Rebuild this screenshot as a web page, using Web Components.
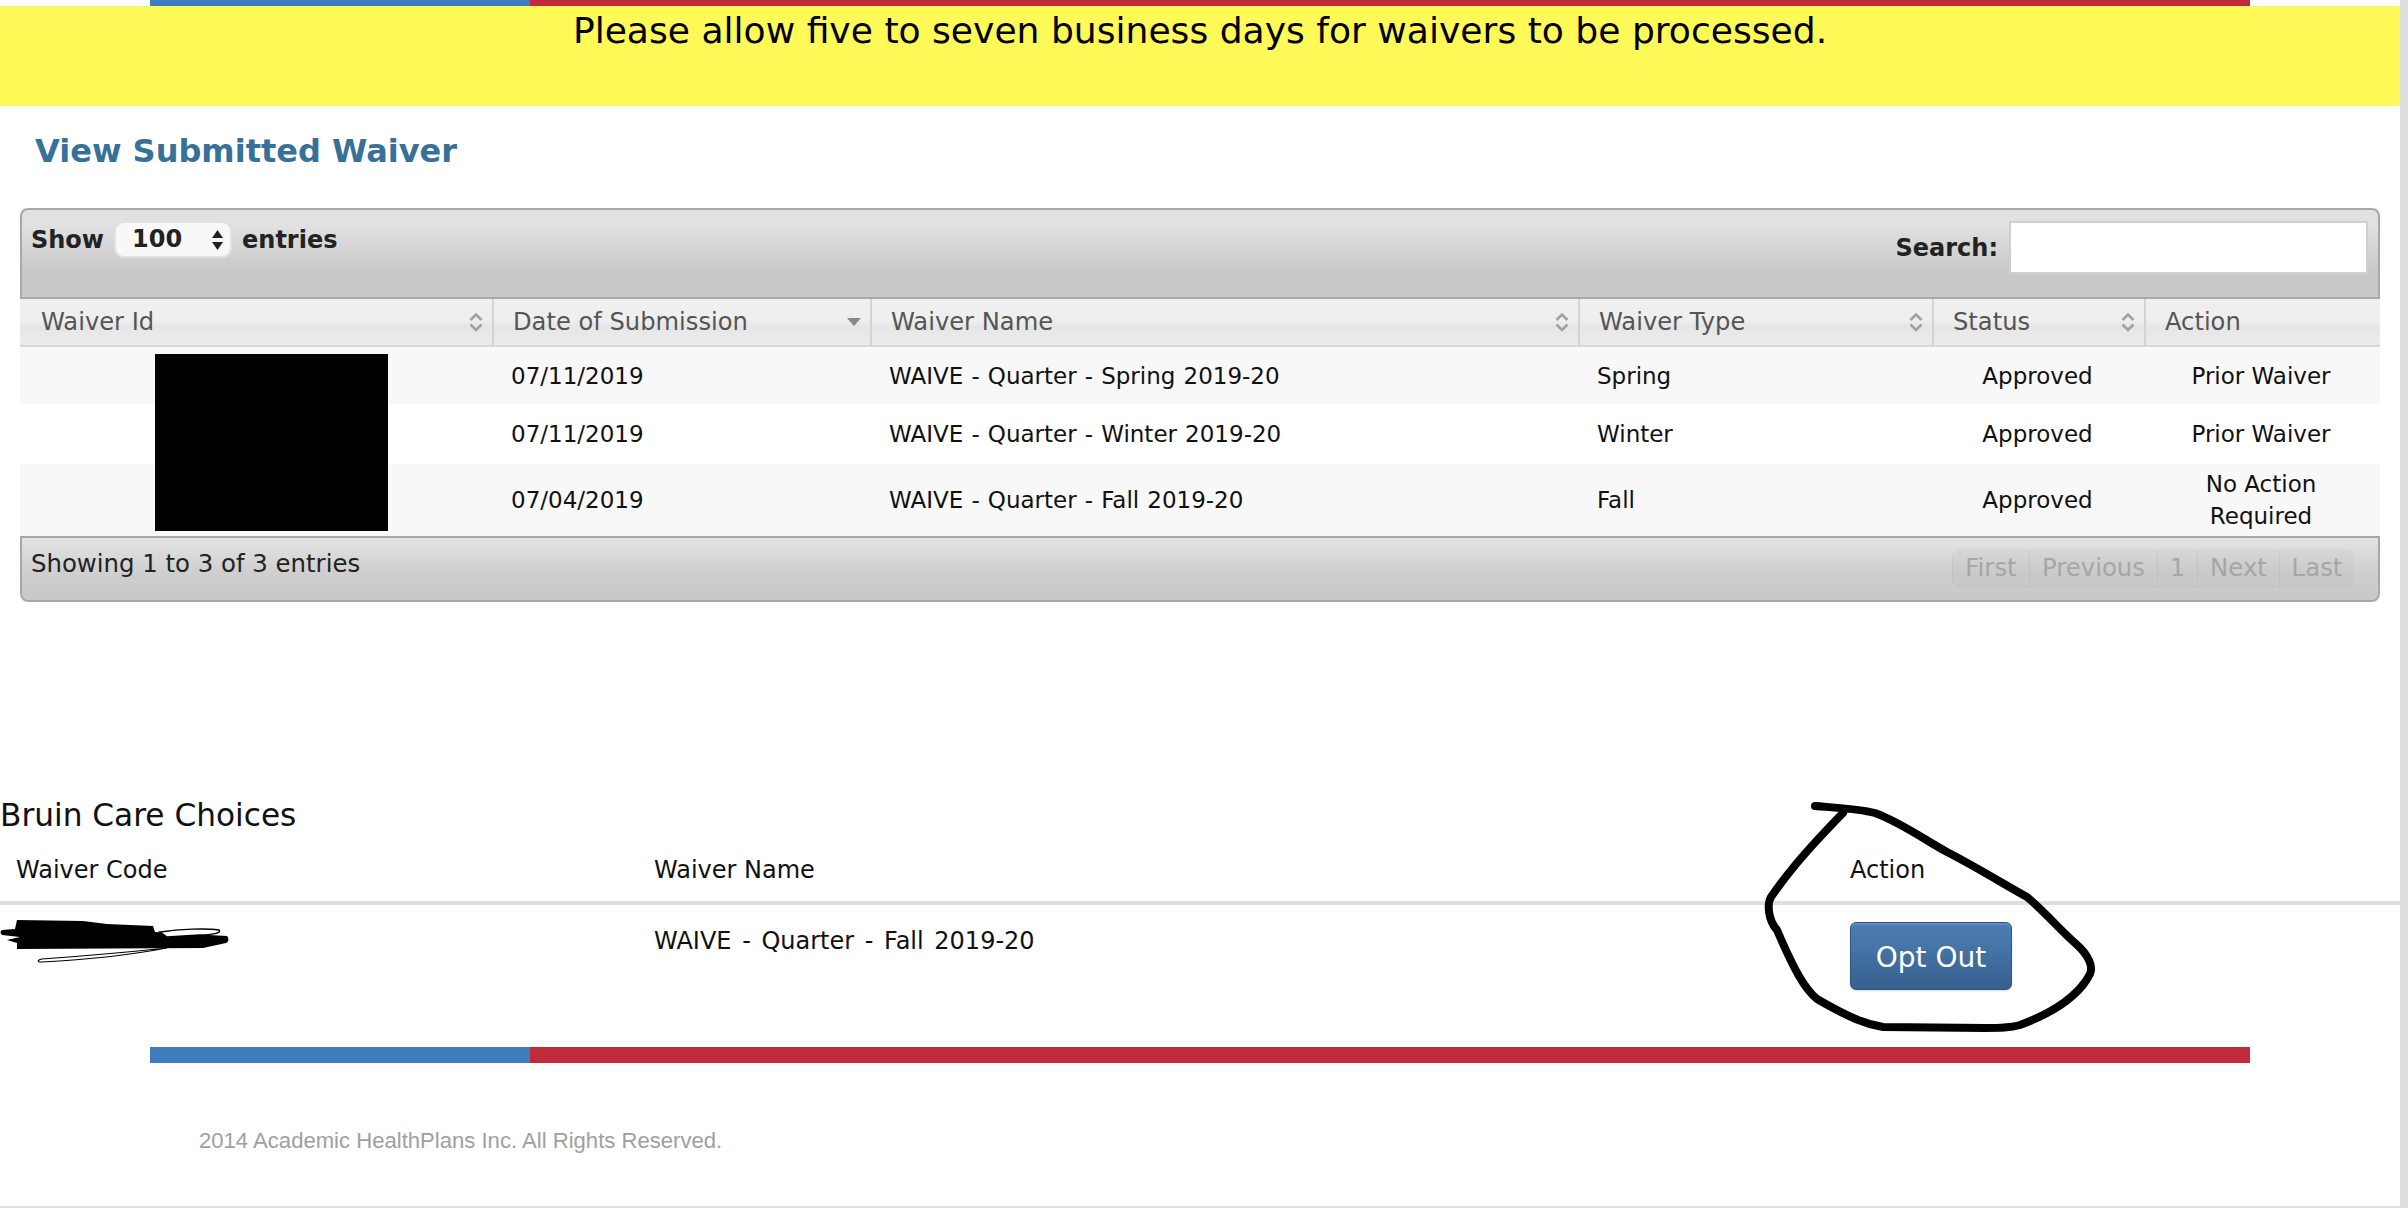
<!DOCTYPE html>
<html lang="en"><head><meta charset="utf-8"><title>View Submitted Waiver</title>
<style>
html,body{margin:0;padding:0;background:#fff;overflow:hidden;height:1208px}
body{font-family:"DejaVu Sans",sans-serif;color:#111}
</style></head><body>
<wv-app>
  <wv-stripe slot="top" thin></wv-stripe>
  <wv-banner>Please allow five to seven business days for waivers to be processed.</wv-banner>
  <wv-title>View Submitted Waiver</wv-title>
  <wv-datatable></wv-datatable>
  <wv-choices heading="Bruin Care Choices"></wv-choices>
  <wv-stripe></wv-stripe>
  <wv-footer>2014 Academic HealthPlans Inc. All Rights Reserved.</wv-footer>
</wv-app>
<script>
function def(name, html, setup){
  customElements.define(name, class extends HTMLElement{
    constructor(){super();const r=this.attachShadow({mode:'open'});r.innerHTML=html;if(setup)setup(this,r);}
  });
}
def('wv-app',`<style>
:host{display:flex;width:2408px;height:1208px;box-sizing:border-box}
.main{width:2400px;height:1206px;display:flex;flex-direction:column;position:relative;border-bottom:2px solid #dedede;box-sizing:content-box}
.bar{width:8px;height:1208px;background:#dedede}
</style><div class="main"><slot name="top"></slot><slot></slot></div><div class="bar"></div>`);

def('wv-stripe',`<style>
:host{display:flex;margin:0 150px;height:16px}
:host([thin]){height:6px}
.b{width:380px;background:#3f7dbf}.r{flex:1;background:#bf2b3a}
</style><div class="b"></div><div class="r"></div>`);

def('wv-banner',`<style>
:host{display:block;height:100px;background:#fffa58;text-align:center;color:#000;font-size:36.1px;line-height:50px;box-sizing:border-box}
</style><slot></slot>`);

def('wv-title',`<style>
:host{display:block;padding:23px 0 0 35px;height:80px;margin-bottom:22px;box-sizing:border-box;color:#377098;font-weight:bold;font-size:32px;line-height:44px}
</style><slot></slot>`);

def('wv-sort',`<style>
:host{display:block;flex:none;width:16px;height:24px}
svg{display:block}
</style><svg width="16" height="24" viewBox="0 0 16 24"></svg>`,(el,r)=>{
  const s=r.querySelector('svg');
  s.innerHTML=el.hasAttribute('down')
   ?'<path d="M1 8H15L8 16Z" fill="#888"/>'
   :'<path d="M2.5 10L8 4.5L13.5 10" fill="none" stroke="#a0a0a0" stroke-width="2.6"/><path d="M2.5 14.5L8 20L13.5 14.5" fill="none" stroke="#a0a0a0" stroke-width="2.6"/>';
});

def('wv-select',`<style>
:host{display:flex;align-items:center;box-sizing:border-box;width:118px;height:37px;background:#f8f8f8;border:2px solid #e2e2e2;border-radius:10px;padding:0 6px 0 16px;justify-content:space-between;font-weight:bold;font-size:24px;color:#222}
svg{display:block}
</style><span><slot></slot></span><svg width="13" height="24" viewBox="0 0 13 24"><path d="M6.5 2L12 10H1Z M1 14H12L6.5 22Z" fill="#222"/></svg>`);

def('wv-pager',`<style>
:host{display:flex;height:39px;border-radius:8px;overflow:hidden;background:rgba(0,0,0,.025);color:#a6a6a6;font-size:24.4px;line-height:38px}
span{display:block;box-sizing:border-box;text-align:center;border-left:1px solid rgba(0,0,0,.04)}
span:first-child{border-left:0}
</style><span style="width:77px">First</span><span style="width:128px">Previous</span><span style="width:40px">1</span><span style="width:82px">Next</span><span style="width:75px">Last</span>`);

def('wv-datatable',`<style>
:host{display:block;position:relative;margin:0 20px 0 20px;width:2360px;font-size:23px}
.tool{box-sizing:border-box;height:91px;border:2px solid #a8a8a8;border-radius:8px 8px 0 0;background:linear-gradient(#e2e2e2 0,#e0e0e0 20%,#c8c8c8 70%,#c8c8c8 100%);display:flex;justify-content:space-between;padding:11px 10px 0 9px;font-weight:bold;color:#222}
.show{display:flex;align-items:flex-start;gap:10px;height:37px;line-height:39px;font-size:24px}
.search{display:flex;align-items:flex-start;gap:11px;font-size:24px;line-height:54px}
.box{box-sizing:border-box;width:359px;height:53px;background:#fff;border:2px solid #cfcfcf}
table{border-collapse:collapse;table-layout:fixed;width:2360px;display:table}
th{box-sizing:border-box;height:47px;padding:0 8px 0 19px;background:linear-gradient(#efefef 0,#efefef 45%,#e6e6e6 60%,#ececec 100%);border-right:2px solid #d4d4d4;border-bottom:2px solid #d8d8d8;text-align:left;font-weight:normal;font-size:24.2px;color:#555}
th:first-child{padding-left:21px}
th:last-child{border-right:0}
.th{display:flex;justify-content:space-between;align-items:center}
td{padding:0 0 0 18px;white-space:nowrap;color:#111;line-height:32px;word-spacing:.8px}
td.c{text-align:center;padding:0 3px 0 0;white-space:normal;word-spacing:0}
tr.a td{background:#f8f8f8}
td:first-child{padding:0}
.r1{height:58px}.r2{height:60px}.r3{height:72px}
.foot{box-sizing:border-box;height:66px;border:2px solid #a8a8a8;border-radius:0 0 8px 8px;background:linear-gradient(#e4e4e4 0,#cfcfcf 55%,#c8c8c8 100%);display:flex;justify-content:space-between;padding:11px 24px 0 9px;color:#222;line-height:30px;font-size:24.4px}
.redact{position:absolute;left:135px;top:146px;width:233px;height:177px;background:#000}
</style>
<div class="tool">
  <div class="show"><span>Show</span><wv-select>100</wv-select><span>entries</span></div>
  <div class="search"><span>Search:</span><div class="box"></div></div>
</div>
<table>
<colgroup><col style="width:473px"><col style="width:378px"><col style="width:708px"><col style="width:354px"><col style="width:212px"><col style="width:235px"></colgroup>
<thead><tr>
<th><div class="th"><span>Waiver Id</span><wv-sort></wv-sort></div></th>
<th><div class="th"><span>Date of Submission</span><wv-sort down></wv-sort></div></th>
<th><div class="th"><span>Waiver Name</span><wv-sort></wv-sort></div></th>
<th><div class="th"><span>Waiver Type</span><wv-sort></wv-sort></div></th>
<th><div class="th"><span>Status</span><wv-sort></wv-sort></div></th>
<th><div class="th"><span>Action</span></div></th>
</tr></thead>
<tbody>
<tr class="a r1"><td></td><td>07/11/2019</td><td>WAIVE - Quarter - Spring 2019-20</td><td>Spring</td><td class="c">Approved</td><td class="c">Prior Waiver</td></tr>
<tr class="r2"><td></td><td>07/11/2019</td><td>WAIVE - Quarter - Winter 2019-20</td><td>Winter</td><td class="c">Approved</td><td class="c">Prior Waiver</td></tr>
<tr class="a r3"><td></td><td>07/04/2019</td><td>WAIVE - Quarter - Fall 2019-20</td><td>Fall</td><td class="c">Approved</td><td class="c">No Action<br>Required</td></tr>
</tbody></table>
<div class="foot"><span>Showing 1 to 3 of 3 entries</span><wv-pager></wv-pager></div>
<div class="redact"></div>`);

def('wv-button',`<style>
:host{display:block;box-sizing:border-box;width:162px;height:68px;border:1px solid #2f5785;border-radius:6px;background:linear-gradient(#4a7db2,#4776a9 30%,#35608e 100%);box-shadow:inset 0 2px 0 rgba(255,255,255,.12),0 1px 2px rgba(0,0,0,.15);color:#fff;font-size:28px;line-height:69px;text-align:center}
</style><slot></slot>`);

def('wv-choices',`<style>
:host{display:block;position:relative;margin-top:191px;height:254px;font-size:24px;color:#111}
h2{margin:0;padding:0;font-weight:normal;font-size:31.2px;line-height:44px;color:#111;height:54px}
.head,.row{display:grid;grid-template-columns:654px 1196px 1fr}
.head{height:54px;line-height:46px;border-bottom:4px solid #dedede;box-sizing:content-box}
.head span:first-child{padding-left:16px}
.row{padding-top:17px}
.row .t{line-height:36px;padding-top:1px;word-spacing:3px}
svg{position:absolute;pointer-events:none;overflow:visible}
</style>
<h2></h2>
<div class="head"><span>Waiver Code</span><span>Waiver Name</span><span>Action</span></div>
<div class="row"><span></span><span class="t">WAIVE - Quarter - Fall 2019-20</span><wv-button>Opt Out</wv-button></div>
<svg class="scrib" style="left:0;top:124px" width="240" height="50" viewBox="0 0 240 50">
  <path d="M17 3L83 4L107 7L153 9L155 15L227 19C229 21 229 25 226 26L203 31L17 32L17 26L7 23L20 20L2 18C0 16 0 14 2 13L15 12Z" fill="#000"/>
  <path d="M160 15C180 12 205 11 219 13C222 16 212 18 200 18L167 20Z" fill="#fff" stroke="#000" stroke-width="1.5"/>
  <path d="M167 31C120 36 70 40 42 42C37 43 37 45 42 45C80 43 130 38 167 31Z" fill="#fff" stroke="#000" stroke-width="1.2"/>
</svg>
<svg class="loop" style="left:1700px;top:-11px" width="460" height="280" viewBox="0 0 460 280">
  <path d="M115 24C140 26 160 27 175 31C200 40 225 58 247 70C280 87 305 103 327 115C345 130 360 148 375 161C390 174 393 185 390 192C380 212 355 230 320 243C310 246 300 246 285 246L183 245C165 242 150 236 117 217C105 207 95 190 77 148C68 138 67 122 71 115C85 95 100 75 143 31" fill="none" stroke="#000" stroke-width="8" stroke-linecap="round" stroke-linejoin="round"/>
</svg>`,(el,r)=>{
  r.querySelector('h2').textContent=el.getAttribute('heading');
});

def('wv-footer',`<style>
:host{display:block;padding:65px 0 0 199px;font-family:"Liberation Sans",Arial,sans-serif;font-size:22.1px;line-height:26px;color:#a0a0a0}
</style><slot></slot>`);
</script>
</body></html>
